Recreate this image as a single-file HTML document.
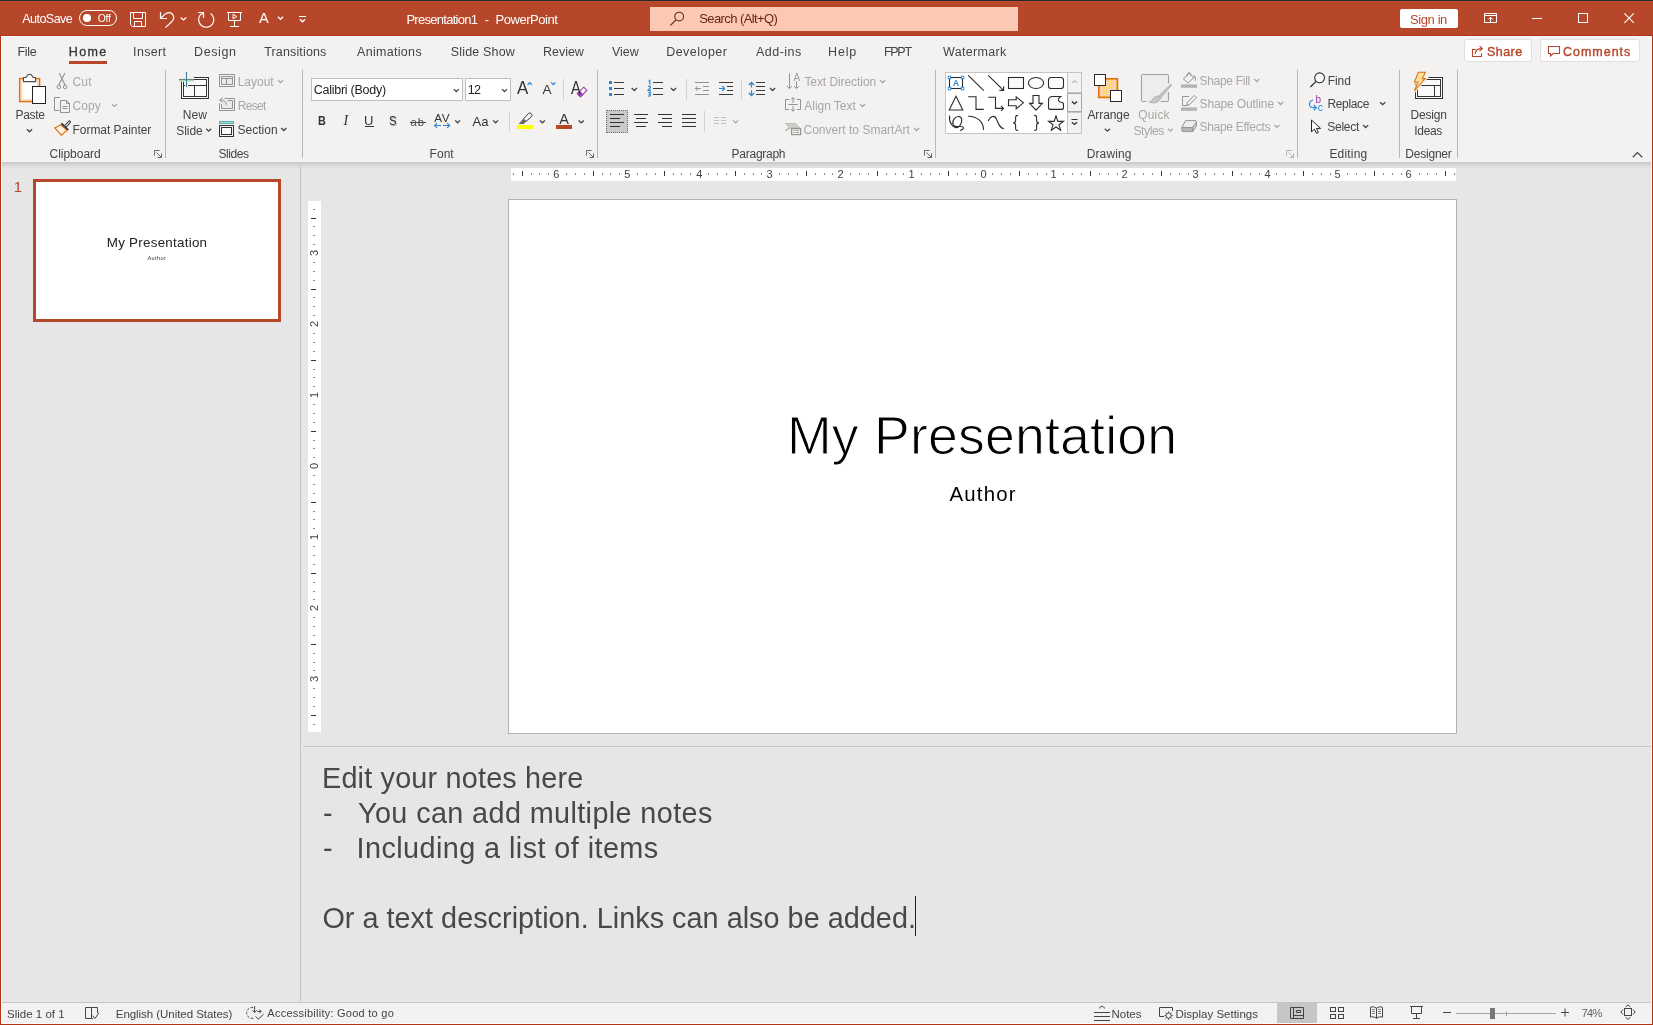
<!DOCTYPE html>
<html><head><meta charset="utf-8"><title>Presentation1 - PowerPoint</title>
<style>
html,body{margin:0;padding:0}
body{width:1653px;height:1025px;overflow:hidden;background:#E6E6E6;position:relative;font-family:"Liberation Sans",sans-serif}
.a{position:absolute}
.t{position:absolute;white-space:pre;line-height:normal}
svg{position:absolute;left:0;top:0}
</style></head>
<body>
<div class="a" style="left:0px;top:0px;width:1653px;height:35px;background:#B7472A;"></div>
<div class="a" style="left:0px;top:0px;width:1653px;height:1px;background:#222B2D;"></div>
<div class="a" style="left:0px;top:1px;width:1653px;height:1px;background:#C34A2C;"></div>
<div class="a" style="left:650px;top:7px;width:368px;height:24px;background:#FBC8B3;"></div>
<div class="a" style="left:1400px;top:9px;width:58px;height:19px;background:#fff;border-radius:2px;"></div>
<div class="a" style="left:0px;top:35px;width:1653px;height:127px;background:#F3F2F1;"></div>
<div class="a" style="left:0px;top:35px;width:1653px;height:1px;background:#B03517;"></div>
<div class="a" style="left:1px;top:36px;width:1651px;height:1px;background:#F8FDFD;"></div>
<div class="a" style="left:69px;top:61px;width:38px;height:3px;background:#B7472A;"></div>
<div class="a" style="left:1464px;top:39px;width:68px;height:23px;background:#fff;box-sizing:border-box;border:1px solid #E1DFDD;border-radius:3px;"></div>
<div class="a" style="left:1540px;top:39px;width:100px;height:23px;background:#fff;box-sizing:border-box;border:1px solid #E1DFDD;border-radius:3px;"></div>
<div class="a" style="left:0px;top:162px;width:1653px;height:7px;background:linear-gradient(#CDCCCA 0%,#CFCECD 28%,#D6D6D5 30%,#D8D8D7 57%,#DFDFDF 60%,#E2E2E2 85%,#E6E6E6 100%);"></div>
<div class="a" style="left:165px;top:70px;width:1px;height:88px;background:#BAB8B6;"></div>
<div class="a" style="left:302px;top:70px;width:1px;height:88px;background:#BAB8B6;"></div>
<div class="a" style="left:597px;top:70px;width:1px;height:88px;background:#BAB8B6;"></div>
<div class="a" style="left:935px;top:70px;width:1px;height:88px;background:#BAB8B6;"></div>
<div class="a" style="left:1297px;top:70px;width:1px;height:88px;background:#BAB8B6;"></div>
<div class="a" style="left:1399px;top:70px;width:1px;height:88px;background:#BAB8B6;"></div>
<div class="a" style="left:1457px;top:70px;width:1px;height:88px;background:#BAB8B6;"></div>
<div class="a" style="left:563px;top:79px;width:1px;height:21px;background:#D2D0CE;"></div>
<div class="a" style="left:686px;top:79px;width:1px;height:21px;background:#D2D0CE;"></div>
<div class="a" style="left:741px;top:79px;width:1px;height:21px;background:#D2D0CE;"></div>
<div class="a" style="left:509px;top:111px;width:1px;height:21px;background:#D2D0CE;"></div>
<div class="a" style="left:704px;top:111px;width:1px;height:21px;background:#D2D0CE;"></div>
<div class="a" style="left:311px;top:78px;width:152px;height:23px;background:#fff;box-sizing:border-box;border:1px solid #C2C0BE;"></div>
<div class="a" style="left:465px;top:78px;width:46px;height:23px;background:#fff;box-sizing:border-box;border:1px solid #C2C0BE;"></div>
<div class="a" style="left:606px;top:110px;width:22px;height:23px;background:#CCCAC8;box-sizing:border-box;border:1px dotted #777573;"></div>
<div class="a" style="left:517px;top:125px;width:16px;height:4px;background:#FFFF00;"></div>
<div class="a" style="left:556px;top:125px;width:16px;height:4px;background:#B7472A;"></div>
<div class="a" style="left:945px;top:72px;width:137px;height:62px;background:#fff;box-sizing:border-box;border:1px solid #C6C4C2;"></div>
<div class="a" style="left:1067px;top:72px;width:15px;height:21px;background:#F3F2F1;box-sizing:border-box;border:1px solid #C6C4C2;"></div>
<div class="a" style="left:1067px;top:93px;width:15px;height:19px;background:#F3F2F1;box-sizing:border-box;border:1px solid #ABA9A7;"></div>
<div class="a" style="left:1067px;top:112px;width:15px;height:22px;background:#F3F2F1;box-sizing:border-box;border:1px solid #C6C4C2;"></div>
<div class="a" style="left:300px;top:165px;width:1px;height:836px;background:#C3C3C3;"></div>
<div class="a" style="left:33px;top:179px;width:248px;height:143px;background:#fff;box-sizing:border-box;border:3px solid #B7472A;"></div>
<div class="a" style="left:511px;top:168px;width:945px;height:13px;background:#fff;"></div>
<div class="a" style="left:308px;top:201px;width:13px;height:531px;background:#fff;"></div>
<div class="a" style="left:508px;top:199px;width:949px;height:535px;background:#fff;box-sizing:border-box;border:1px solid #B2B2B2;"></div>
<div class="a" style="left:303px;top:746px;width:1350px;height:1px;background:#C3C3C3;"></div>
<div class="a" style="left:915px;top:896px;width:1px;height:40px;background:#222;"></div>
<div class="a" style="left:0px;top:1002px;width:1653px;height:23px;background:#F3F2F1;"></div>
<div class="a" style="left:0px;top:1002px;width:1653px;height:1px;background:#C6C6C6;"></div>
<div class="a" style="left:1277px;top:1003px;width:40px;height:20px;background:#C8C6C4;"></div>
<div class="a" style="left:1px;top:36px;width:1px;height:988px;background:#F8FDFD;"></div>
<div class="a" style="left:1651px;top:36px;width:1px;height:988px;background:#F8FDFD;"></div>
<div class="a" style="left:1px;top:1023px;width:1651px;height:1px;background:#F8FDFD;"></div>
<div class="a" style="left:0px;top:35px;width:1px;height:990px;background:#B03517;"></div>
<div class="a" style="left:1652px;top:35px;width:1px;height:990px;background:#B03517;"></div>
<div class="a" style="left:0px;top:1024px;width:1653px;height:1px;background:#B03517;"></div>
<svg width="1653" height="1025" viewBox="0 0 1653 1025" fill="none">
<rect x="79.5" y="10.5" width="37" height="15" rx="7.5" stroke="#fff"/>
<circle cx="87" cy="18" r="4.1" fill="#fff"/>
<path d="M130.5 12.5 H145.5 V26.5 H132.5 L130.5 24.5 Z M133.5 12.5 V18.5 H142.5 V12.5 M134.5 26.5 V21.5 H141.5 V26.5" stroke="#fff"/>
<path d="M160.5 12 V18.5 H167 M160.8 18.2 L164.8 14.4 C167.2 12.2 171 12 172.8 14.6 C174.5 17.2 173.6 19.8 171.6 21.8 L165.4 27.6" stroke="#fff" stroke-width="1.2"/>
<path d="M180.8 17.4 L183.5 19.9 L186.2 17.4" stroke="#fff" stroke-width="1.3"/>
<path d="M198.2 12.5 H203.5 V18 M203.3 12.7 L200.2 15 A7.6 7.6 0 1 0 210.6 13.4" stroke="#fff" stroke-width="1.2"/>
<path d="M227 12.5 H242 M228.5 12.5 V20.5 H240.5 V12.5 M234.5 20.5 V26.5 M230 26.5 H239 M233 14.3 V18.7 L236.8 16.5 Z" stroke="#fff"/>
<path d="M277.9 16.8 L280.5 19.4 L283.1 16.8" stroke="#fff" stroke-width="1.3"/>
<path d="M299 16.5 H306" stroke="#fff"/>
<path d="M299.9 19.3 L302.5 21.8 L305.1 19.3" stroke="#fff" stroke-width="1.3"/>
<circle cx="679.2" cy="16.6" r="4.4" stroke="#6A2415" stroke-width="1.1"/><path d="M676 19.8 L670.4 25.4" stroke="#6A2415" stroke-width="1.2"/>
<path d="M1484.5 13.5 H1496.5 V22.5 H1484.5 Z M1484.5 15.5 H1496.5 M1490.5 22 V17.4 M1488.3 19.5 L1490.5 17.3 L1492.7 19.5" stroke="#fff"/>
<path d="M1532 18.5 H1542" stroke="#fff"/>
<rect x="1578.5" y="13.5" width="9" height="9" stroke="#fff"/>
<path d="M1624.4 13.4 L1633.8 22.8 M1633.8 13.4 L1624.4 22.8" stroke="#fff" stroke-width="1.1"/>
<path d="M1476 49.5 H1472.5 V56.5 H1481.5 V53.2 M1475.3 54 C1475.3 50.4 1478 48.6 1482 48.6 M1479.6 46.1 L1482.4 48.6 L1479.6 51.1" stroke="#B7472A" stroke-width="1.1"/>
<path d="M1548.5 46.5 H1559.5 V53.5 H1553.2 L1550.5 56 V53.5 H1548.5 Z" stroke="#B7472A" stroke-width="1.1"/>
<rect x="19.6" y="78.6" width="20" height="23" fill="#FBDCC4" stroke="#E3730E" stroke-width="1.4"/>
<rect x="22.3" y="81.3" width="14.6" height="17.6" fill="#fff"/>
<path d="M23.5 77.5 H26 C27.2 76.6 26.6 74.2 29.6 74.2 C32.6 74.2 32 76.6 33.2 77.5 H35.6 V81.6 H23.5 Z" fill="#fff" stroke="#505050" stroke-width="1.1"/>
<rect x="32.5" y="86.5" width="13" height="17" fill="#fff" stroke="#222"/>
<path d="M26.9 129.2 L29.5 131.8 L32.1 129.2" stroke="#444444" stroke-width="1.3"/>
<path d="M59.2 73.3 L65.3 85.2 M64.8 73.3 L58.7 85.2" stroke="#959391" stroke-width="1.2"/>
<circle cx="58.8" cy="87" r="1.8" stroke="#959391"/><circle cx="65.1" cy="87" r="1.8" stroke="#959391"/>
<path d="M60 97.5 H54.5 V110.5 H59.5 M60.5 100.5 H66.5 L69.5 103.5 V112.5 H60.5 Z M66.5 100.5 V103.5 H69.5 M62.5 106.5 H67.5 M62.5 108.5 H67.5" stroke="#959391"/>
<path d="M111.9 104.2 L114.5 106.5 L117.1 104.2" stroke="#A9A7A5" stroke-width="1.3"/>
<path d="M61 124.8 L54.8 127.9 L61.3 135.2 L66.8 130.4 Z" fill="#FDF3E4" stroke="#E3730E" stroke-width="1.2"/>
<path d="M61.4 123.4 L68.2 129.9" stroke="#333" stroke-width="1.7"/>
<path d="M65.8 126 L69.4 121.9" stroke="#333" stroke-width="3" stroke-linecap="round"/>
<path d="M65.9 125.9 L69.3 122" stroke="#fff" stroke-width="1.1" stroke-linecap="round"/>
<path d="M154.5 155.5 V150.5 H159.5" stroke="#666"/><path d="M156.5 152.5 L161.5 157.5 M161.5 153.5 V157.5 H157.5" stroke="#666"/>
<rect x="181.5" y="77.5" width="27" height="21" fill="#FAFAFA" stroke="#333"/>
<rect x="183.5" y="79.5" width="23" height="17" stroke="#333"/>
<path d="M183.5 85.5 H206.5 M194.5 85.5 V96.5" stroke="#333"/>
<path d="M186.5 71.5 V88" stroke="#F3F2F1" stroke-width="3"/><path d="M178.5 79.3 H194" stroke="#F3F2F1" stroke-width="4.6"/>
<path d="M179 80.6 H194" stroke="#A5DFB6" stroke-width="1.4"/><path d="M186.5 72 V87" stroke="#4A7F9C" stroke-width="1.1"/><path d="M179 79.5 H194" stroke="#5A8A84" stroke-width="1.1"/>
<path d="M206.2 128.8 L208.7 131.2 L211.2 128.8" stroke="#444444" stroke-width="1.3"/>
<rect x="221.5" y="76.5" width="11" height="8" fill="#EAEAE9"/><path d="M219.5 74.5 H234.5 V86.5 H219.5 Z M221.5 76.5 H232.5 V84.5 H221.5 Z M221.5 78.5 H232.5 M226.5 78.5 V84.5" stroke="#959391"/>
<path d="M278.1 80.2 L280.6 82.5 L283.1 80.2" stroke="#A9A7A5" stroke-width="1.3"/>
<rect x="222" y="101" width="10" height="7" fill="#EAEAE9"/><path d="M224.5 98.5 H234.5 V110.5 H219.5 V103.2 M227.6 100.5 H232.5 V108.5 H221.5 V104" stroke="#959391"/>
<path d="M219.8 100.2 C222.6 99.2 226 100.6 226.4 104.8 M222.6 97.3 L219.6 100.2 L223 102.5" stroke="#959391"/>
<rect x="219.5" y="121.5" width="14" height="2" fill="#A9E2BC" stroke="#4AA3C0" stroke-width="0.9"/>
<rect x="219.5" y="125.5" width="14" height="11" stroke="#333"/><rect x="221.5" y="127.5" width="10" height="7" fill="#FAFAFA" stroke="#333"/>
<path d="M281.2 128.0 L283.8 130.5 L286.4 128.0" stroke="#444444" stroke-width="1.3"/>
<path d="M453.8 89.1 L456.3 91.5 L458.8 89.1" stroke="#444444" stroke-width="1.3"/>
<path d="M502.0 89.1 L504.5 91.5 L507.0 89.1" stroke="#444444" stroke-width="1.3"/>
<path d="M527.6 84.8 L529.7 82.7 L531.9 84.8" stroke="#2B88D8" stroke-width="1.3"/>
<path d="M551.1 82.4 L553.3 84.5 L555.4 82.4" stroke="#2B88D8" stroke-width="1.3"/>
<path d="M583.8 87.2 L586.8 90.4 L580.4 96.9 L577.3 93.6 Z" fill="#fff" stroke="#9B3FB5" stroke-width="1.1"/>
<path d="M579.8 91.1 L582.9 94.4 L580.4 96.9 L577.3 93.6 Z" fill="#9B3FB5" stroke="#9B3FB5" stroke-width="0.6"/>
<path d="M365 126.5 H374" stroke="#333" stroke-width="1"/>
<path d="M410 122.5 H426" stroke="#444" stroke-width="1"/>
<path d="M434.6 125.5 H441 M443 125.5 H449.6 M437 123.1 L434.6 125.5 L437 127.9 M447.2 123.1 L449.6 125.5 L447.2 127.9" stroke="#2B88D8" stroke-width="1.2"/>
<path d="M455.2 120.4 L457.6 122.8 L460.0 120.4" stroke="#444444" stroke-width="1.3"/>
<path d="M493.1 120.4 L495.6 122.8 L498.1 120.4" stroke="#444444" stroke-width="1.3"/>
<path d="M539.9 120.4 L542.5 122.8 L545.0 120.4" stroke="#444444" stroke-width="1.3"/>
<path d="M578.6 120.4 L581.2 122.8 L583.9 120.4" stroke="#444444" stroke-width="1.3"/>
<path d="M523.4 119.2 L528.6 113.4 Q530.4 112.2 531.6 114 Q532.6 115.4 531.4 116.6 L526 121.4 Z" stroke="#333" fill="#FAFAFA"/>
<path d="M523.2 119 L526.2 121.6 L523.6 124 H518.6 Z" fill="#666"/>
<path d="M586.5 155.5 V150.5 H591.5" stroke="#666"/><path d="M588.5 152.5 L593.5 157.5 M593.5 153.5 V157.5 H589.5" stroke="#666"/>
<rect x="609" y="81" width="3" height="3" fill="#2B88D8"/>
<path d="M614 82.5 H624" stroke="#3a3a3a" stroke-width="1"/>
<path d="M653 82.5 H663" stroke="#3a3a3a" stroke-width="1"/>
<rect x="609" y="87" width="3" height="3" fill="#2B88D8"/>
<path d="M614 88.5 H624" stroke="#3a3a3a" stroke-width="1"/>
<path d="M653 88.5 H663" stroke="#3a3a3a" stroke-width="1"/>
<rect x="609" y="93" width="3" height="3" fill="#2B88D8"/>
<path d="M614 94.5 H624" stroke="#3a3a3a" stroke-width="1"/>
<path d="M653 94.5 H663" stroke="#3a3a3a" stroke-width="1"/>
<path d="M648.6 81.2 L649.8 80.4 V84.5 M648.2 86.6 C649 85.8 650.6 86 650.4 87.4 L648.2 90.3 H651 M648.3 92.3 H650.6 L649.4 94 C651 94 651.2 96.3 648.2 96.2" stroke="#2B88D8" stroke-width="1.25"/>
<path d="M631.6 88.1 L634.3 90.5 L636.9 88.1" stroke="#444444" stroke-width="1.3"/>
<path d="M670.9 88.1 L673.5 90.5 L676.1 88.1" stroke="#444444" stroke-width="1.3"/>
<path d="M695 82.5 H709 M703 86.5 H709 M703 90.5 H709 M695 94.5 H709 M695.4 88.5 H701 M697.8 86 L695.3 88.5 L697.8 91" stroke="#959391"/>
<path d="M719 82.5 H733 M727 86.5 H733 M727 90.5 H733 M719 94.5 H733" stroke="#3a3a3a"/>
<path d="M719 88.5 H724.6 M722.2 86 L724.7 88.5 L722.2 91" stroke="#2B88D8" stroke-width="1.1"/>
<path d="M751.5 82.4 V87.6 M751.5 90.2 V95.6 M748.9 85 L751.5 82.4 L754.1 85 M748.9 93 L751.5 95.6 L754.1 93" stroke="#2B88D8" stroke-width="1.25"/>
<path d="M756 82.5 H765 M756 86.5 H765 M756 90.5 H765 M756 94.5 H765" stroke="#3a3a3a"/>
<path d="M770.0 88.1 L772.6 90.5 L775.2 88.1" stroke="#444444" stroke-width="1.3"/>
<path d="M610 114.5 H624 M610 118.5 H620 M610 122.5 H624 M610 126.5 H620 " stroke="#333" stroke-width="1.2"/>
<path d="M634 114.5 H648 M636 118.5 H646 M634 122.5 H648 M636 126.5 H646 " stroke="#333" stroke-width="1.2"/>
<path d="M658 114.5 H672 M662 118.5 H672 M658 122.5 H672 M662 126.5 H672 " stroke="#333" stroke-width="1.2"/>
<path d="M682 114.5 H696 M682 118.5 H696 M682 122.5 H696 M682 126.5 H696 " stroke="#333" stroke-width="1.2"/>
<path d="M714 117.5 H719 M721 117.5 H726 M714 120.5 H719 M721 120.5 H726 M714 123.5 H719 M721 123.5 H726" stroke="#C2C0BE"/>
<path d="M733.1 120.4 L735.6 122.8 L738.1 120.4" stroke="#A9A7A5" stroke-width="1.3"/>
<path d="M789.5 73.4 V88.6 M786.9 86 L789.5 88.6 L792.1 86 M796.5 81.6 V88.6 M794.1 86.2 L796.5 88.6 L798.9 86.2" stroke="#959391"/>
<path d="M880.1 80.2 L882.7 82.5 L885.2 80.2" stroke="#A9A7A5" stroke-width="1.3"/>
<path d="M789 99.5 H785.5 V109.5 H789 M797 99.5 H800.5 V109.5 H797 M788.5 104.5 H797.5 M793 103 V97.6 M791 99.6 L793 97.6 L795 99.6 M793 106 V111.2 M791 109.2 L793 111.2 L795 109.2" stroke="#959391"/>
<path d="M860.0 104.0 L862.5 106.5 L865.1 104.0" stroke="#A9A7A5" stroke-width="1.3"/>
<path d="M785.4 123.6 H795.2 L799.8 127.8 H790.6 L786 131 L785.4 130.4 L788.8 127 Z" fill="#D2D0CE" stroke="#A9A7A5" stroke-width="0.7"/>
<rect x="791.6" y="128.6" width="9" height="6" fill="#F3F2F1" stroke="#959391" stroke-width="1.2"/>
<path d="M793.2 130.4 H794.4 M795.4 130.4 H799 M793.2 132.5 H794.4 M795.4 132.5 H799" stroke="#959391" stroke-width="0.9"/>
<path d="M914.1 128.0 L916.7 130.5 L919.2 128.0" stroke="#A9A7A5" stroke-width="1.3"/>
<path d="M924.5 155.5 V150.5 H929.5" stroke="#666"/><path d="M926.5 152.5 L931.5 157.5 M931.5 153.5 V157.5 H927.5" stroke="#666"/>
<rect x="949.5" y="77.5" width="13" height="11" stroke="#2b2b2b" stroke-width="1.1"/>
<rect x="948.2" y="76.2" width="2.6" height="2.6" fill="#fff" stroke="#2B88D8" stroke-width="0.9"/>
<rect x="961.2" y="76.2" width="2.6" height="2.6" fill="#fff" stroke="#2B88D8" stroke-width="0.9"/>
<rect x="948.2" y="87.2" width="2.6" height="2.6" fill="#fff" stroke="#2B88D8" stroke-width="0.9"/>
<rect x="961.2" y="87.2" width="2.6" height="2.6" fill="#fff" stroke="#2B88D8" stroke-width="0.9"/>
<path d="M968.2 75.3 L983.8 90.6" stroke="#2b2b2b" stroke-width="1.1"/>
<path d="M988.2 75.3 L1003.6 90.4 M1003.6 86.2 V90.4 H999.4" stroke="#2b2b2b" stroke-width="1.1"/>
<rect x="1008.5" y="77.5" width="15" height="11" fill="#FBFBFB" stroke="#2b2b2b" stroke-width="1.1"/>
<ellipse cx="1036" cy="83" rx="7.6" ry="5.5" fill="#FBFBFB" stroke="#2b2b2b" stroke-width="1.1"/>
<rect x="1048.5" y="77.5" width="15" height="11" rx="2.6" fill="#FBFBFB" stroke="#2b2b2b" stroke-width="1.1"/>
<path d="M956 96.2 L962.8 110 H949.2 Z" fill="#FBFBFB" stroke="#2b2b2b" stroke-width="1.1"/>
<path d="M968.2 96.7 H976 V109.4 H983.8" stroke="#2b2b2b" stroke-width="1.1"/>
<path d="M988.2 97.2 H995.5 V108.4 H1003.4 M1001 105.9 L1003.5 108.4 L1001 110.9" stroke="#2b2b2b" stroke-width="1.1"/>
<path d="M1008.5 99.8 H1016.2 V96.8 L1023.4 102.8 L1016.2 108.8 V105.8 H1008.5 Z" fill="#FBFBFB" stroke="#2b2b2b" stroke-width="1.1"/>
<path d="M1033 95.5 H1039 V103.4 H1042.4 L1036 110.2 L1029.6 103.4 H1033 Z" fill="#FBFBFB" stroke="#2b2b2b" stroke-width="1.1"/>
<path d="M1052.5 96.5 H1060.6 C1057.2 98.6 1058 102.4 1061.4 102.2 C1063 102.2 1063.5 103 1063.5 104.4 V107.4 Q1063.5 109.4 1061.5 109.4 H1050.5 Q1048.5 109.4 1048.5 107.4 V100.5 Q1048.5 96.5 1052.5 96.5 Z" fill="#FBFBFB" stroke="#2b2b2b" stroke-width="1.1"/>
<path d="M949.6 115.6 C948.6 122 953 129 957.4 127.4 C961.4 126 963.6 117.6 959.4 116.6 C955 115.8 951.4 121.4 953.4 125 C955.6 128.6 962.6 124.6 963.4 127.6 C963.8 129.4 961.4 130 960 130.6" stroke="#2b2b2b" stroke-width="1.1"/>
<path d="M968.2 116.2 C977 116.4 983.4 121 983.6 130" stroke="#2b2b2b" stroke-width="1.1"/>
<path d="M988.2 121 C990.5 116 994.6 114.6 996.6 119.4 C998.6 124.2 1000 128.4 1003.8 128.6" stroke="#2b2b2b" stroke-width="1.1"/>
<path d="M1018 115.4 C1015.4 115.4 1015.6 116.6 1015.6 118.4 V120.6 C1015.6 122.2 1014.8 122.8 1013.2 122.9 C1014.8 123 1015.6 123.6 1015.6 125.2 V127.4 C1015.6 129.2 1015.4 130.4 1018 130.4" stroke="#2b2b2b" stroke-width="1.1"/>
<path d="M1034.2 115.4 C1036.8 115.4 1036.6 116.6 1036.6 118.4 V120.6 C1036.6 122.2 1037.4 122.8 1039 122.9 C1037.4 123 1036.6 123.6 1036.6 125.2 V127.4 C1036.6 129.2 1036.8 130.4 1034.2 130.4" stroke="#2b2b2b" stroke-width="1.1"/>
<path d="M1056 116 L1057.9 121.4 H1063.4 L1059 124.8 L1060.6 130.2 L1056 127 L1051.4 130.2 L1053 124.8 L1048.6 121.4 H1054.1 Z" fill="#FBFBFB" stroke="#2b2b2b" stroke-width="1.1"/>
<path d="M1071.9 83.0 L1074.5 80.7 L1077.1 83.0" stroke="#C4C2C0" stroke-width="1.3"/>
<path d="M1071.9 101.4 L1074.5 103.8 L1077.1 101.4" stroke="#333" stroke-width="1.3"/>
<path d="M1071.5 119.5 H1077.5" stroke="#333" stroke-width="1"/>
<path d="M1071.9 122.2 L1074.5 124.5 L1077.1 122.2" stroke="#333" stroke-width="1.3"/>
<defs><pattern id="dots" width="3" height="3" patternUnits="userSpaceOnUse"><rect width="3" height="3" fill="#FBCDB4"/><rect x="0" y="0" width="1.3" height="1.3" fill="#FFF200"/></pattern></defs>
<rect x="1098.8" y="78.8" width="18.6" height="18.6" fill="url(#dots)" stroke="#E3730E" stroke-width="1.7"/>
<rect x="1094.5" y="74.5" width="11" height="11" fill="#FCFCFC" stroke="#2b2b2b"/>
<rect x="1110.5" y="90.5" width="11" height="11" fill="#FCFCFC" stroke="#2b2b2b"/>
<path d="M1104.8 128.8 L1107.3 131.2 L1109.9 128.8" stroke="#444444" stroke-width="1.3"/>
<rect x="1142" y="75" width="26" height="26" rx="1.5" fill="#EDEDEC"/>
<path d="M1146.4 101.5 H1143 Q1141.5 101.5 1141.5 100 V76 Q1141.5 74.5 1143 74.5 H1167 Q1168.5 74.5 1168.5 76 V83.6 M1168.5 92 V100 Q1168.5 101.5 1167 101.5 H1160.6" stroke="#A3A19F" fill="none" stroke-width="1.1"/>
<path d="M1170.9 84 L1171.2 85.6 L1160.2 98.4 L1158.2 96.6 Z" fill="#C4C2C0" stroke="#ABA9A7" stroke-width="0.8"/>
<path d="M1158.4 96.2 C1155.4 95.6 1153.4 97.6 1152.6 99.4 C1151.8 101 1150.4 101.6 1148.8 101.8 C1152.6 104 1158.8 103.4 1160.4 98.2 Z" fill="#C8C6C4" stroke="#ABA9A7" stroke-width="0.8"/>
<path d="M1167.9 128.8 L1170.4 131.2 L1172.9 128.8" stroke="#A9A7A5" stroke-width="1.3"/>
<path d="M1183.4 78.9 L1189.2 73.2 L1193.9 77.6 L1188.1 83 Z M1187.4 76.4 C1186.6 74 1188 72.2 1189.6 72.8 C1190.6 73.2 1190.8 74.4 1190.6 75.6" stroke="#959391"/>
<path d="M1193.6 75.4 C1195.6 76.6 1196 78.8 1195.2 80.8 M1194.6 76.8 L1193.4 78.6" stroke="#959391"/>
<rect x="1181" y="84.4" width="16" height="3.4" fill="#B5B3B1"/>
<path d="M1254.2 79.0 L1256.8 81.5 L1259.2 79.0" stroke="#A9A7A5" stroke-width="1.3"/>
<path d="M1189 96.5 H1182.5 V105.5 H1188" stroke="#959391"/>
<path d="M1194.4 95.4 L1196.6 97.6 L1189.6 104.6 L1186.8 105.2 L1187.4 102.4 Z" stroke="#959391"/>
<rect x="1181" y="107.4" width="16" height="3.4" fill="#B5B3B1"/>
<path d="M1278.1 102.0 L1280.7 104.5 L1283.2 102.0" stroke="#A9A7A5" stroke-width="1.3"/>
<path d="M1185.6 120.6 H1195 Q1196.9 120.6 1196.3 122.4 L1192.6 127.6 H1181.8 Z" stroke="#959391" fill="#EEEEED"/>
<path d="M1192.6 127.6 L1196.4 122.2 V126.2 L1192.6 131.6 Z" fill="#D6D4D2" stroke="#959391"/>
<path d="M1181.8 127.6 H1192.6 V131.6 H1183 Q1181.8 131.6 1181.8 130.4 Z" fill="#B9B7B5" stroke="#959391"/>
<path d="M1274.3 124.9 L1276.8 127.3 L1279.4 124.9" stroke="#A9A7A5" stroke-width="1.3"/>
<path d="M1286.5 155.5 V150.5 H1291.5" stroke="#B5B3B1"/><path d="M1288.5 152.5 L1293.5 157.5 M1293.5 153.5 V157.5 H1289.5" stroke="#B5B3B1"/>
<circle cx="1319.6" cy="77.8" r="4.9" stroke="#333" stroke-width="1.1" fill="#FAFAFA"/><path d="M1316 81.4 L1310.3 87" stroke="#333" stroke-width="1.3"/>
<path d="M1312.8 100.2 C1309.4 101 1308.4 104.8 1310.4 106.6 C1311.2 107.4 1312.4 107.7 1313.6 107.7 H1316.2 M1313.7 105 L1316.4 107.7 L1313.7 110.4" stroke="#2B88D8" stroke-width="1.2"/>
<path d="M1380.1 102.2 L1382.7 104.6 L1385.2 102.2" stroke="#444444" stroke-width="1.3"/>
<path d="M1311.5 120 V131.8 L1314.4 129.2 L1316.6 133.4 L1318.4 132.4 L1316.4 128.4 H1320.6 Z" stroke="#222" fill="#FCFCFC" stroke-width="1"/>
<path d="M1363.1 125.1 L1365.7 127.5 L1368.2 125.1" stroke="#444444" stroke-width="1.3"/>
<rect x="1415.5" y="77.5" width="27" height="21" fill="#FAFAFA" stroke="#333"/><rect x="1417.5" y="79.5" width="23" height="17" stroke="#333"/>
<path d="M1417.5 85.5 H1440.5 M1434.5 85.5 V96.5" stroke="#333"/>
<path d="M1418.4 71.4 H1426.4 L1423 78.2 H1426.2 L1413.6 92.4 L1417.6 82.4 H1413.8 Z" fill="#F3F2F1" stroke="#F3F2F1" stroke-width="2.4"/>
<path d="M1418.4 72.2 H1425.4 L1422.4 78.6 H1425.2 L1414.4 91 L1418 82 H1414.4 Z" fill="#FCE29E" stroke="#E3730E" stroke-width="1.1"/>
<path d="M1632.8 157.2 L1637.5 152.6 L1642.2 157.2" stroke="#444" stroke-width="1.2"/>
<path d="M85.5 1018.5 V1007.5 H91.5 V1018.5 Z M91.5 1007.5 H97.5 V1013 M91.5 1018.5 H93 M92.6 1015.6 L95 1018.6 L99 1012.6" stroke="#444"/>
<path d="M253 1007.6 A5.4 5.4 0 1 0 253.2 1018.2" stroke="#444" stroke-dasharray="2.6 1.5"/>
<path d="M254.6 1006 V1012.4 M252.5 1010.3 L254.6 1012.4 L256.7 1010.3 M257.2 1011.4 H261 M259.4 1009.6 L261.2 1011.4 L259.4 1013.2 M255.6 1016.4 L258.2 1019.2 L263.6 1014.2" stroke="#444"/>
<path d="M1099 1008.4 L1102 1005.8 L1105 1008.4 M1094 1012.5 H1110 M1094 1016.5 H1110 M1094 1020.5 H1110" stroke="#444"/>
<path d="M1164 1016.5 H1159.5 V1007.5 H1172.5 V1011" stroke="#444"/>
<circle cx="1168.6" cy="1015.6" r="2.6" stroke="#444"/><path d="M1168.6 1011.4 V1012.8 M1168.6 1018.4 V1019.8 M1164.4 1015.6 H1165.8 M1171.4 1015.6 H1172.8 M1165.6 1012.6 L1166.6 1013.6 M1170.6 1017.6 L1171.6 1018.6 M1171.6 1012.6 L1170.6 1013.6 M1166.6 1017.6 L1165.6 1018.6" stroke="#444"/>
<path d="M1290.5 1007.5 H1303.5 V1018.5 H1290.5 Z M1293.5 1007.5 V1018.5 M1293.5 1015.5 H1303.5 M1296.5 1010.5 H1300.5 V1012.5 H1296.5 Z" stroke="#444"/>
<rect x="1330.5" y="1007.5" width="5" height="4" stroke="#444"/>
<rect x="1330.5" y="1014.5" width="5" height="4" stroke="#444"/>
<rect x="1338.5" y="1007.5" width="5" height="4" stroke="#444"/>
<rect x="1338.5" y="1014.5" width="5" height="4" stroke="#444"/>
<path d="M1376.5 1008.2 C1374.4 1006.6 1372 1006.6 1370.5 1007.2 V1017.2 C1372 1016.6 1374.4 1016.6 1376.5 1018.2 C1378.6 1016.6 1381 1016.6 1382.5 1017.2 V1007.2 C1381 1006.6 1378.6 1006.6 1376.5 1008.2 V1018.2" stroke="#444"/>
<path d="M1372 1009.5 H1375 M1372 1011.5 H1375 M1372 1013.5 H1375 M1378 1009.5 H1381 M1378 1011.5 H1381 M1378 1013.5 H1381" stroke="#666" stroke-width="0.8"/>
<path d="M1410 1006.5 H1423 M1411.5 1006.5 V1013.5 H1421.5 V1006.5 M1416.5 1013.5 V1018.5 M1413 1018.5 H1420" stroke="#444"/>
<path d="M1443 1012.5 H1451" stroke="#444"/>
<path d="M1456 1013.5 H1556" stroke="#A6A6A6"/><path d="M1506.5 1011 V1016" stroke="#A6A6A6"/>
<rect x="1490" y="1008" width="5" height="11" fill="#777"/>
<path d="M1561 1012.5 H1569 M1565 1008.5 V1016.5" stroke="#444"/>
<rect x="1624.5" y="1008.5" width="7" height="7" stroke="#444"/>
<path d="M1625.6 1007 L1628 1004.8 L1630.4 1007 M1625.6 1017.2 L1628 1019.4 L1630.4 1017.2 M1623 1009.6 L1620.8 1012 L1623 1014.4 M1633 1009.6 L1635.2 1012 L1633 1014.4" stroke="#444"/>
<path d="M513.5 173 V175" stroke="#8A8A8A"/>
<path d="M522.5 171 V176" stroke="#333"/>
<path d="M531.5 173 V175" stroke="#8A8A8A"/>
<path d="M539.5 173 V175" stroke="#8A8A8A"/>
<path d="M548.5 173 V175" stroke="#8A8A8A"/>
<path d="M566.5 173 V175" stroke="#8A8A8A"/>
<path d="M575.5 173 V175" stroke="#8A8A8A"/>
<path d="M584.5 173 V175" stroke="#8A8A8A"/>
<path d="M593.5 171 V176" stroke="#333"/>
<path d="M602.5 173 V175" stroke="#8A8A8A"/>
<path d="M610.5 173 V175" stroke="#8A8A8A"/>
<path d="M619.5 173 V175" stroke="#8A8A8A"/>
<path d="M637.5 173 V175" stroke="#8A8A8A"/>
<path d="M646.5 173 V175" stroke="#8A8A8A"/>
<path d="M655.5 173 V175" stroke="#8A8A8A"/>
<path d="M664.5 171 V176" stroke="#333"/>
<path d="M673.5 173 V175" stroke="#8A8A8A"/>
<path d="M681.5 173 V175" stroke="#8A8A8A"/>
<path d="M690.5 173 V175" stroke="#8A8A8A"/>
<path d="M708.5 173 V175" stroke="#8A8A8A"/>
<path d="M717.5 173 V175" stroke="#8A8A8A"/>
<path d="M726.5 173 V175" stroke="#8A8A8A"/>
<path d="M735.5 171 V176" stroke="#333"/>
<path d="M744.5 173 V175" stroke="#8A8A8A"/>
<path d="M753.5 173 V175" stroke="#8A8A8A"/>
<path d="M761.5 173 V175" stroke="#8A8A8A"/>
<path d="M779.5 173 V175" stroke="#8A8A8A"/>
<path d="M788.5 173 V175" stroke="#8A8A8A"/>
<path d="M797.5 173 V175" stroke="#8A8A8A"/>
<path d="M806.5 171 V176" stroke="#333"/>
<path d="M815.5 173 V175" stroke="#8A8A8A"/>
<path d="M824.5 173 V175" stroke="#8A8A8A"/>
<path d="M832.5 173 V175" stroke="#8A8A8A"/>
<path d="M850.5 173 V175" stroke="#8A8A8A"/>
<path d="M859.5 173 V175" stroke="#8A8A8A"/>
<path d="M868.5 173 V175" stroke="#8A8A8A"/>
<path d="M877.5 171 V176" stroke="#333"/>
<path d="M886.5 173 V175" stroke="#8A8A8A"/>
<path d="M895.5 173 V175" stroke="#8A8A8A"/>
<path d="M903.5 173 V175" stroke="#8A8A8A"/>
<path d="M921.5 173 V175" stroke="#8A8A8A"/>
<path d="M930.5 173 V175" stroke="#8A8A8A"/>
<path d="M939.5 173 V175" stroke="#8A8A8A"/>
<path d="M948.5 171 V176" stroke="#333"/>
<path d="M957.5 173 V175" stroke="#8A8A8A"/>
<path d="M966.5 173 V175" stroke="#8A8A8A"/>
<path d="M975.5 173 V175" stroke="#8A8A8A"/>
<path d="M992.5 173 V175" stroke="#8A8A8A"/>
<path d="M1001.5 173 V175" stroke="#8A8A8A"/>
<path d="M1010.5 173 V175" stroke="#8A8A8A"/>
<path d="M1019.5 171 V176" stroke="#333"/>
<path d="M1028.5 173 V175" stroke="#8A8A8A"/>
<path d="M1037.5 173 V175" stroke="#8A8A8A"/>
<path d="M1046.5 173 V175" stroke="#8A8A8A"/>
<path d="M1063.5 173 V175" stroke="#8A8A8A"/>
<path d="M1072.5 173 V175" stroke="#8A8A8A"/>
<path d="M1081.5 173 V175" stroke="#8A8A8A"/>
<path d="M1090.5 171 V176" stroke="#333"/>
<path d="M1099.5 173 V175" stroke="#8A8A8A"/>
<path d="M1108.5 173 V175" stroke="#8A8A8A"/>
<path d="M1117.5 173 V175" stroke="#8A8A8A"/>
<path d="M1134.5 173 V175" stroke="#8A8A8A"/>
<path d="M1143.5 173 V175" stroke="#8A8A8A"/>
<path d="M1152.5 173 V175" stroke="#8A8A8A"/>
<path d="M1161.5 171 V176" stroke="#333"/>
<path d="M1170.5 173 V175" stroke="#8A8A8A"/>
<path d="M1179.5 173 V175" stroke="#8A8A8A"/>
<path d="M1188.5 173 V175" stroke="#8A8A8A"/>
<path d="M1205.5 173 V175" stroke="#8A8A8A"/>
<path d="M1214.5 173 V175" stroke="#8A8A8A"/>
<path d="M1223.5 173 V175" stroke="#8A8A8A"/>
<path d="M1232.5 171 V176" stroke="#333"/>
<path d="M1241.5 173 V175" stroke="#8A8A8A"/>
<path d="M1250.5 173 V175" stroke="#8A8A8A"/>
<path d="M1259.5 173 V175" stroke="#8A8A8A"/>
<path d="M1276.5 173 V175" stroke="#8A8A8A"/>
<path d="M1285.5 173 V175" stroke="#8A8A8A"/>
<path d="M1294.5 173 V175" stroke="#8A8A8A"/>
<path d="M1303.5 171 V176" stroke="#333"/>
<path d="M1312.5 173 V175" stroke="#8A8A8A"/>
<path d="M1321.5 173 V175" stroke="#8A8A8A"/>
<path d="M1330.5 173 V175" stroke="#8A8A8A"/>
<path d="M1347.5 173 V175" stroke="#8A8A8A"/>
<path d="M1356.5 173 V175" stroke="#8A8A8A"/>
<path d="M1365.5 173 V175" stroke="#8A8A8A"/>
<path d="M1374.5 171 V176" stroke="#333"/>
<path d="M1383.5 173 V175" stroke="#8A8A8A"/>
<path d="M1392.5 173 V175" stroke="#8A8A8A"/>
<path d="M1401.5 173 V175" stroke="#8A8A8A"/>
<path d="M1419.5 173 V175" stroke="#8A8A8A"/>
<path d="M1427.5 173 V175" stroke="#8A8A8A"/>
<path d="M1436.5 173 V175" stroke="#8A8A8A"/>
<path d="M1445.5 171 V176" stroke="#333"/>
<path d="M1454.5 173 V175" stroke="#8A8A8A"/>
<path d="M313 209.5 H315" stroke="#8A8A8A"/>
<path d="M311 218.5 H316" stroke="#333"/>
<path d="M313 226.5 H315" stroke="#8A8A8A"/>
<path d="M313 235.5 H315" stroke="#8A8A8A"/>
<path d="M313 244.5 H315" stroke="#8A8A8A"/>
<path d="M313 262.5 H315" stroke="#8A8A8A"/>
<path d="M313 271.5 H315" stroke="#8A8A8A"/>
<path d="M313 280.5 H315" stroke="#8A8A8A"/>
<path d="M311 289.5 H316" stroke="#333"/>
<path d="M313 297.5 H315" stroke="#8A8A8A"/>
<path d="M313 306.5 H315" stroke="#8A8A8A"/>
<path d="M313 315.5 H315" stroke="#8A8A8A"/>
<path d="M313 333.5 H315" stroke="#8A8A8A"/>
<path d="M313 342.5 H315" stroke="#8A8A8A"/>
<path d="M313 351.5 H315" stroke="#8A8A8A"/>
<path d="M311 360.5 H316" stroke="#333"/>
<path d="M313 369.5 H315" stroke="#8A8A8A"/>
<path d="M313 377.5 H315" stroke="#8A8A8A"/>
<path d="M313 386.5 H315" stroke="#8A8A8A"/>
<path d="M313 404.5 H315" stroke="#8A8A8A"/>
<path d="M313 413.5 H315" stroke="#8A8A8A"/>
<path d="M313 422.5 H315" stroke="#8A8A8A"/>
<path d="M311 431.5 H316" stroke="#333"/>
<path d="M313 440.5 H315" stroke="#8A8A8A"/>
<path d="M313 448.5 H315" stroke="#8A8A8A"/>
<path d="M313 457.5 H315" stroke="#8A8A8A"/>
<path d="M313 475.5 H315" stroke="#8A8A8A"/>
<path d="M313 484.5 H315" stroke="#8A8A8A"/>
<path d="M313 493.5 H315" stroke="#8A8A8A"/>
<path d="M311 502.5 H316" stroke="#333"/>
<path d="M313 511.5 H315" stroke="#8A8A8A"/>
<path d="M313 519.5 H315" stroke="#8A8A8A"/>
<path d="M313 528.5 H315" stroke="#8A8A8A"/>
<path d="M313 546.5 H315" stroke="#8A8A8A"/>
<path d="M313 555.5 H315" stroke="#8A8A8A"/>
<path d="M313 564.5 H315" stroke="#8A8A8A"/>
<path d="M311 573.5 H316" stroke="#333"/>
<path d="M313 582.5 H315" stroke="#8A8A8A"/>
<path d="M313 591.5 H315" stroke="#8A8A8A"/>
<path d="M313 599.5 H315" stroke="#8A8A8A"/>
<path d="M313 617.5 H315" stroke="#8A8A8A"/>
<path d="M313 626.5 H315" stroke="#8A8A8A"/>
<path d="M313 635.5 H315" stroke="#8A8A8A"/>
<path d="M311 644.5 H316" stroke="#333"/>
<path d="M313 653.5 H315" stroke="#8A8A8A"/>
<path d="M313 662.5 H315" stroke="#8A8A8A"/>
<path d="M313 670.5 H315" stroke="#8A8A8A"/>
<path d="M313 688.5 H315" stroke="#8A8A8A"/>
<path d="M313 697.5 H315" stroke="#8A8A8A"/>
<path d="M313 706.5 H315" stroke="#8A8A8A"/>
<path d="M311 715.5 H316" stroke="#333"/>
<path d="M313 724.5 H315" stroke="#8A8A8A"/>
</svg>
<div id="tx" style="position:absolute;left:0;top:0;width:1653px;height:1025px;will-change:transform">
<div class="t" style="left:22.20px;top:12.00px;font:normal 400 12.6px 'Liberation Sans';color:#fff;letter-spacing:-0.571px;">AutoSave</div>
<div class="t" style="left:97.80px;top:13.00px;font:normal 400 10.4px 'Liberation Sans';color:#fff;letter-spacing:-0.300px;">Off</div>
<div class="t" style="left:406.40px;top:12.00px;font:normal 400 13px 'Liberation Sans';color:#fff;letter-spacing:-0.717px;">Presentation1</div>
<div class="t" style="left:484.80px;top:12.00px;font:normal 400 13px 'Liberation Sans';color:#fff;">-</div>
<div class="t" style="left:495.60px;top:12.00px;font:normal 400 13px 'Liberation Sans';color:#fff;letter-spacing:-0.478px;">PowerPoint</div>
<div class="t" style="left:699.20px;top:11.00px;font:normal 400 13px 'Liberation Sans';color:#6A2415;letter-spacing:-0.585px;">Search (Alt+Q)</div>
<div class="t" style="left:1410.00px;top:12.00px;font:normal 400 13px 'Liberation Sans';color:#B7472A;letter-spacing:-0.400px;">Sign in</div>
<div class="t" style="left:259.30px;top:9.00px;font:normal 400 15.4px 'Liberation Sans';color:#fff;transform:scaleX(.95);transform-origin:0 0;">A</div>
<div class="t" style="left:17.50px;top:45.00px;font:normal 400 12.5px 'Liberation Sans';color:#444444;letter-spacing:-0.300px;">File</div>
<div class="t" style="left:133.10px;top:45.00px;font:normal 400 12.5px 'Liberation Sans';color:#444444;letter-spacing:0.320px;">Insert</div>
<div class="t" style="left:194.10px;top:45.00px;font:normal 400 12.5px 'Liberation Sans';color:#444444;letter-spacing:0.580px;">Design</div>
<div class="t" style="left:264.20px;top:45.00px;font:normal 400 12.5px 'Liberation Sans';color:#444444;letter-spacing:0.150px;">Transitions</div>
<div class="t" style="left:357.00px;top:45.00px;font:normal 400 12.5px 'Liberation Sans';color:#444444;letter-spacing:0.311px;">Animations</div>
<div class="t" style="left:450.80px;top:45.00px;font:normal 400 12.5px 'Liberation Sans';color:#444444;letter-spacing:0.167px;">Slide Show</div>
<div class="t" style="left:543.00px;top:45.00px;font:normal 400 12.5px 'Liberation Sans';color:#444444;letter-spacing:-0.020px;">Review</div>
<div class="t" style="left:611.90px;top:45.00px;font:normal 400 12.5px 'Liberation Sans';color:#444444;letter-spacing:0.033px;">View</div>
<div class="t" style="left:666.20px;top:45.00px;font:normal 400 12.5px 'Liberation Sans';color:#444444;letter-spacing:0.475px;">Developer</div>
<div class="t" style="left:755.90px;top:45.00px;font:normal 400 12.5px 'Liberation Sans';color:#444444;letter-spacing:0.500px;">Add-ins</div>
<div class="t" style="left:828.10px;top:45.00px;font:normal 400 12.5px 'Liberation Sans';color:#444444;letter-spacing:0.800px;">Help</div>
<div class="t" style="left:884.00px;top:45.00px;font:normal 400 12.5px 'Liberation Sans';color:#444444;letter-spacing:-1.300px;">FPPT</div>
<div class="t" style="left:943.10px;top:45.00px;font:normal 400 12.5px 'Liberation Sans';color:#444444;letter-spacing:0.325px;">Watermark</div>
<div class="t" style="left:68.80px;top:45.00px;font:normal 400 12.5px 'Liberation Sans';color:#333;letter-spacing:1.367px;-webkit-text-stroke:0.32px #3a3a3a;">Home</div>
<div class="t" style="left:1486.90px;top:45.00px;font:normal 400 12.5px 'Liberation Sans';color:#B7472A;letter-spacing:0.475px;-webkit-text-stroke:0.4px #B7472A;">Share</div>
<div class="t" style="left:1563.10px;top:45.00px;font:normal 400 12.5px 'Liberation Sans';color:#B7472A;letter-spacing:0.957px;-webkit-text-stroke:0.4px #B7472A;">Comments</div>
<div class="t" style="left:15.50px;top:108.00px;font:normal 400 12px 'Liberation Sans';color:#444444;letter-spacing:-0.325px;">Paste</div>
<div class="t" style="left:72.50px;top:75.00px;font:normal 400 12px 'Liberation Sans';color:#A9A7A5;letter-spacing:0.150px;">Cut</div>
<div class="t" style="left:72.50px;top:99.00px;font:normal 400 12px 'Liberation Sans';color:#A9A7A5;letter-spacing:0.100px;">Copy</div>
<div class="t" style="left:72.50px;top:123.00px;font:normal 400 12px 'Liberation Sans';color:#444444;letter-spacing:-0.038px;">Format Painter</div>
<div class="t" style="left:49.60px;top:147.00px;font:normal 400 12px 'Liberation Sans';color:#444444;letter-spacing:-0.038px;">Clipboard</div>
<div class="t" style="left:182.70px;top:108.00px;font:normal 400 12px 'Liberation Sans';color:#444444;letter-spacing:0.050px;">New</div>
<div class="t" style="left:176.30px;top:124.00px;font:normal 400 12px 'Liberation Sans';color:#444444;letter-spacing:-0.075px;">Slide</div>
<div class="t" style="left:237.70px;top:75.00px;font:normal 400 12px 'Liberation Sans';color:#A9A7A5;letter-spacing:-0.020px;">Layout</div>
<div class="t" style="left:237.70px;top:99.00px;font:normal 400 12px 'Liberation Sans';color:#A9A7A5;letter-spacing:-0.700px;">Reset</div>
<div class="t" style="left:237.40px;top:123.00px;font:normal 400 12px 'Liberation Sans';color:#444444;letter-spacing:0.050px;">Section</div>
<div class="t" style="left:218.40px;top:147.00px;font:normal 400 12px 'Liberation Sans';color:#444444;letter-spacing:-0.400px;">Slides</div>
<div class="t" style="left:313.70px;top:83.00px;font:normal 400 12.5px 'Liberation Sans';color:#222;letter-spacing:-0.254px;">Calibri (Body)</div>
<div class="t" style="left:467.70px;top:83.00px;font:normal 400 12.5px 'Liberation Sans';color:#222;letter-spacing:-0.700px;">12</div>
<div class="t" style="left:317.50px;top:113.00px;font:normal 700 13.6px 'Liberation Sans';color:#333;transform:scaleX(.8);transform-origin:0 0;">B</div>
<div class="t" style="left:343.50px;top:113.00px;font:italic 400 14px 'Liberation Serif';color:#333;">I</div>
<div class="t" style="left:364.00px;top:113.00px;font:normal 400 13px 'Liberation Sans';color:#333;">U</div>
<div class="t" style="left:388.80px;top:113.00px;font:normal 400 13.4px 'Liberation Sans';color:#333;text-shadow:1px 1px 1px #999;transform:scaleX(.84);transform-origin:0 0;">S</div>
<div class="t" style="left:410.60px;top:116.00px;font:normal 400 11.2px 'Liberation Sans';color:#4a4a4a;letter-spacing:1.000px;">ab</div>
<div class="t" style="left:434.20px;top:111.00px;font:normal 400 11.7px 'Liberation Sans';color:#333;letter-spacing:0.600px;">AV</div>
<div class="t" style="left:472.40px;top:114.00px;font:normal 400 13px 'Liberation Sans';color:#333;letter-spacing:0.200px;">Aa</div>
<div class="t" style="left:516.80px;top:78.00px;font:normal 400 18px 'Liberation Sans';color:#333;transform:scaleX(.94);transform-origin:0 0;">A</div>
<div class="t" style="left:542.60px;top:82.00px;font:normal 400 13.5px 'Liberation Sans';color:#333;">A</div>
<div class="t" style="left:570.80px;top:78.00px;font:normal 400 18px 'Liberation Sans';color:#333;transform:scaleX(.82);transform-origin:0 0;">A</div>
<div class="t" style="left:559.20px;top:111.00px;font:normal 400 14.5px 'Liberation Sans';color:#333;">A</div>
<div class="t" style="left:429.60px;top:147.00px;font:normal 400 12px 'Liberation Sans';color:#444444;letter-spacing:0.033px;">Font</div>
<div class="t" style="left:804.40px;top:75.00px;font:normal 400 12px 'Liberation Sans';color:#A9A7A5;letter-spacing:-0.069px;">Text Direction</div>
<div class="t" style="left:804.30px;top:99.00px;font:normal 400 12px 'Liberation Sans';color:#A9A7A5;letter-spacing:-0.044px;">Align Text</div>
<div class="t" style="left:803.50px;top:123.00px;font:normal 400 12px 'Liberation Sans';color:#A9A7A5;letter-spacing:0.017px;">Convert to SmartArt</div>
<div class="t" style="left:731.60px;top:147.00px;font:normal 400 12px 'Liberation Sans';color:#444444;letter-spacing:-0.263px;">Paragraph</div>
<div class="t" style="left:1087.40px;top:108.00px;font:normal 400 12px 'Liberation Sans';color:#444444;letter-spacing:-0.083px;">Arrange</div>
<div class="t" style="left:1138.30px;top:108.00px;font:normal 400 12px 'Liberation Sans';color:#A9A7A5;letter-spacing:0.150px;">Quick</div>
<div class="t" style="left:1133.50px;top:124.00px;font:normal 400 12px 'Liberation Sans';color:#A9A7A5;letter-spacing:-0.400px;">Styles</div>
<div class="t" style="left:1199.50px;top:74.00px;font:normal 400 12px 'Liberation Sans';color:#A9A7A5;letter-spacing:-0.300px;">Shape Fill</div>
<div class="t" style="left:1199.50px;top:97.00px;font:normal 400 12px 'Liberation Sans';color:#A9A7A5;letter-spacing:-0.125px;">Shape Outline</div>
<div class="t" style="left:1199.50px;top:120.00px;font:normal 400 12px 'Liberation Sans';color:#A9A7A5;letter-spacing:-0.292px;">Shape Effects</div>
<div class="t" style="left:1086.70px;top:147.00px;font:normal 400 12px 'Liberation Sans';color:#444444;letter-spacing:0.133px;">Drawing</div>
<div class="t" style="left:1327.80px;top:74.00px;font:normal 400 12px 'Liberation Sans';color:#444444;letter-spacing:-0.100px;">Find</div>
<div class="t" style="left:1327.50px;top:97.00px;font:normal 400 12px 'Liberation Sans';color:#444444;letter-spacing:-0.367px;">Replace</div>
<div class="t" style="left:1327.20px;top:120.00px;font:normal 400 12px 'Liberation Sans';color:#444444;letter-spacing:-0.240px;">Select</div>
<div class="t" style="left:1329.40px;top:147.00px;font:normal 400 12px 'Liberation Sans';color:#444444;letter-spacing:0.183px;">Editing</div>
<div class="t" style="left:1410.50px;top:108.00px;font:normal 400 12px 'Liberation Sans';color:#444444;letter-spacing:-0.180px;">Design</div>
<div class="t" style="left:1414.30px;top:124.00px;font:normal 400 12px 'Liberation Sans';color:#444444;letter-spacing:-0.325px;">Ideas</div>
<div class="t" style="left:1405.30px;top:147.00px;font:normal 400 12px 'Liberation Sans';color:#444444;letter-spacing:-0.214px;">Designer</div>
<div class="t" style="left:953.00px;top:78.00px;font:normal 700 8.4px 'Liberation Sans';color:#2B88D8;">A</div>
<div class="t" style="left:1315.50px;top:94.00px;font:normal 400 10px 'Liberation Sans';color:#9B3FB5;">b</div>
<div class="t" style="left:1317.80px;top:101.00px;font:normal 400 10.5px 'Liberation Sans';color:#2B88D8;">c</div>
<div class="t" style="left:793.40px;top:72.00px;font:normal 400 10px 'Liberation Sans';color:#9F9D9B;">A</div>
<div class="t" style="left:13.80px;top:178.00px;font:normal 400 15px 'Liberation Sans';color:#B7472A;">1</div>
<div class="t" style="left:106.80px;top:235.00px;font:normal 400 13.4px 'Liberation Sans';color:#222;letter-spacing:0.250px;">My Presentation</div>
<div class="t" style="left:147.50px;top:255.00px;font:normal 400 5.6px 'Liberation Sans';color:#333;letter-spacing:0.380px;">Author</div>
<div class="t" style="left:787.00px;top:404.00px;font:normal 400 53.6px 'Liberation Sans';color:#000;letter-spacing:0.200px;-webkit-text-stroke:1.05px #fff;">My Presentation</div>
<div class="t" style="left:949.50px;top:483.00px;font:normal 400 20.4px 'Liberation Sans';color:#000;letter-spacing:1.200px;">Author</div>
<div class="t" style="left:322.00px;top:762.00px;font:normal 400 28.8px 'Liberation Sans';color:#484848;letter-spacing:0.189px;">Edit your notes here</div>
<div class="t" style="left:323.00px;top:797.00px;font:normal 400 28.8px 'Liberation Sans';color:#484848;">-</div>
<div class="t" style="left:358.00px;top:797.00px;font:normal 400 28.8px 'Liberation Sans';color:#484848;letter-spacing:0.384px;">You can add multiple notes</div>
<div class="t" style="left:323.00px;top:832.00px;font:normal 400 28.8px 'Liberation Sans';color:#484848;">-</div>
<div class="t" style="left:356.50px;top:832.00px;font:normal 400 28.8px 'Liberation Sans';color:#484848;letter-spacing:0.433px;">Including a list of items</div>
<div class="t" style="left:322.40px;top:902.00px;font:normal 400 28.8px 'Liberation Sans';color:#484848;letter-spacing:0.028px;">Or a text description. Links can also be added.</div>
<div class="t" style="left:7.10px;top:1008.00px;font:normal 400 11.5px 'Liberation Sans';color:#444;letter-spacing:-0.009px;">Slide 1 of 1</div>
<div class="t" style="left:115.80px;top:1008.00px;font:normal 400 11.5px 'Liberation Sans';color:#444;letter-spacing:-0.050px;">English (United States)</div>
<div class="t" style="left:267.30px;top:1007.00px;font:normal 400 11px 'Liberation Sans';color:#444;letter-spacing:0.250px;">Accessibility: Good to go</div>
<div class="t" style="left:1111.50px;top:1008.00px;font:normal 400 11.5px 'Liberation Sans';color:#444;letter-spacing:-0.025px;">Notes</div>
<div class="t" style="left:1175.50px;top:1008.00px;font:normal 400 11.5px 'Liberation Sans';color:#444;">Display Settings</div>
<div class="t" style="left:1581.40px;top:1007.00px;font:normal 400 11.5px 'Liberation Sans';color:#666;letter-spacing:-0.950px;">74%</div>
<div class="t" style="left:553.30px;top:168.00px;font:normal 400 11px 'Liberation Sans';color:#444;">6</div>
<div class="t" style="left:624.30px;top:168.00px;font:normal 400 11px 'Liberation Sans';color:#444;">5</div>
<div class="t" style="left:696.30px;top:168.00px;font:normal 400 11px 'Liberation Sans';color:#444;">4</div>
<div class="t" style="left:766.40px;top:168.00px;font:normal 400 11px 'Liberation Sans';color:#444;">3</div>
<div class="t" style="left:837.40px;top:168.00px;font:normal 400 11px 'Liberation Sans';color:#444;">2</div>
<div class="t" style="left:908.40px;top:168.00px;font:normal 400 11px 'Liberation Sans';color:#444;">1</div>
<div class="t" style="left:980.40px;top:168.00px;font:normal 400 11px 'Liberation Sans';color:#444;">0</div>
<div class="t" style="left:1050.40px;top:168.00px;font:normal 400 11px 'Liberation Sans';color:#444;">1</div>
<div class="t" style="left:1121.40px;top:168.00px;font:normal 400 11px 'Liberation Sans';color:#444;">2</div>
<div class="t" style="left:1192.50px;top:168.00px;font:normal 400 11px 'Liberation Sans';color:#444;">3</div>
<div class="t" style="left:1264.50px;top:168.00px;font:normal 400 11px 'Liberation Sans';color:#444;">4</div>
<div class="t" style="left:1334.50px;top:168.00px;font:normal 400 11px 'Liberation Sans';color:#444;">5</div>
<div class="t" style="left:1405.50px;top:168.00px;font:normal 400 11px 'Liberation Sans';color:#444;">6</div>
<div class="t" style="left:308.4px;top:246.7px;width:12px;height:12px;line-height:12px;text-align:center;font-size:11px;color:#444;transform:rotate(-90deg);">3</div>
<div class="t" style="left:308.4px;top:317.8px;width:12px;height:12px;line-height:12px;text-align:center;font-size:11px;color:#444;transform:rotate(-90deg);">2</div>
<div class="t" style="left:308.4px;top:388.8px;width:12px;height:12px;line-height:12px;text-align:center;font-size:11px;color:#444;transform:rotate(-90deg);">1</div>
<div class="t" style="left:308.4px;top:459.9px;width:12px;height:12px;line-height:12px;text-align:center;font-size:11px;color:#444;transform:rotate(-90deg);">0</div>
<div class="t" style="left:308.4px;top:530.9px;width:12px;height:12px;line-height:12px;text-align:center;font-size:11px;color:#444;transform:rotate(-90deg);">1</div>
<div class="t" style="left:308.4px;top:602.0px;width:12px;height:12px;line-height:12px;text-align:center;font-size:11px;color:#444;transform:rotate(-90deg);">2</div>
<div class="t" style="left:308.4px;top:673.0px;width:12px;height:12px;line-height:12px;text-align:center;font-size:11px;color:#444;transform:rotate(-90deg);">3</div>
</div>
</body></html>
